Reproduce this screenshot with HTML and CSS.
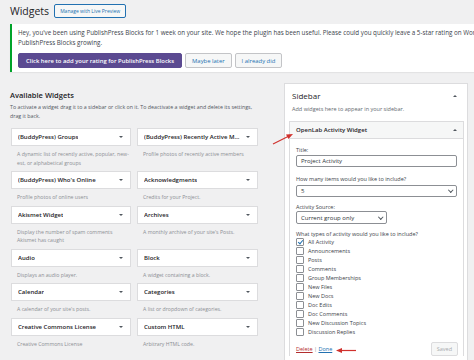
FILE: index.html
```html
<!DOCTYPE html>
<html lang="en">

<head>
    <meta charset="UTF-8">
    <meta name="viewport" content="width=device-width, initial-scale=1.0">
    <title>Widgets</title>
    <link rel="stylesheet" href="styles.css">
</head>

<body>
    <div class="page-head">
        <h1 class="page-title">Widgets</h1>
        <button class="btn-outline">Manage with Live Preview</button>
    </div>

    <div class="notice">
        <p>Hey, you've been using PublishPress Blocks for 1 week on your site. We hope the plugin has been useful. Please could you quickly leave a 5-star rating on WordPress.org to help keep</p>
        <p>PublishPress Blocks growing.</p>
        <div class="notice-actions">
            <button class="btn-primary">Click here to add your rating for PublishPress Blocks</button>
            <button class="btn-secondary">Maybe later</button>
            <button class="btn-secondary">I already did</button>
        </div>
    </div>

    <div class="main">
        <div class="available">
            <h2 class="section-title">Available Widgets</h2>
            <p class="section-desc">To activate a widget drag it to a sidebar or click on it. To deactivate a widget and delete its settings, drag it back.</p>

            <div class="widget-list">
                <div class="widget-item">
                    <div class="widget-top"><span>(BuddyPress) Groups</span><i class="caret"></i></div>
                    <div class="widget-desc">A dynamic list of recently active, popular, new&shy;est, or alphabetical groups</div>
                </div>
                <div class="widget-item">
                    <div class="widget-top"><span>(BuddyPress) Recently Active Members</span><i class="caret"></i></div>
                    <div class="widget-desc">Profile photos of recently active members</div>
                </div>
                <div class="widget-item">
                    <div class="widget-top"><span>(BuddyPress) Who's Online</span><i class="caret"></i></div>
                    <div class="widget-desc">Profile photos of online users</div>
                </div>
                <div class="widget-item">
                    <div class="widget-top"><span>Acknowledgments</span><i class="caret"></i></div>
                    <div class="widget-desc">Credits for your Project.</div>
                </div>
                <div class="widget-item">
                    <div class="widget-top"><span>Akismet Widget</span><i class="caret"></i></div>
                    <div class="widget-desc">Display the number of spam comments Akismet has caught</div>
                </div>
                <div class="widget-item">
                    <div class="widget-top"><span>Archives</span><i class="caret"></i></div>
                    <div class="widget-desc">A monthly archive of your site's Posts.</div>
                </div>
                <div class="widget-item">
                    <div class="widget-top"><span>Audio</span><i class="caret"></i></div>
                    <div class="widget-desc">Displays an audio player.</div>
                </div>
                <div class="widget-item">
                    <div class="widget-top"><span>Block</span><i class="caret"></i></div>
                    <div class="widget-desc">A widget containing a block.</div>
                </div>
                <div class="widget-item">
                    <div class="widget-top"><span>Calendar</span><i class="caret"></i></div>
                    <div class="widget-desc">A calendar of your site's posts.</div>
                </div>
                <div class="widget-item">
                    <div class="widget-top"><span>Categories</span><i class="caret"></i></div>
                    <div class="widget-desc">A list or dropdown of categories.</div>
                </div>
                <div class="widget-item">
                    <div class="widget-top"><span>Creative Commons License</span><i class="caret"></i></div>
                    <div class="widget-desc">Creative Commons License</div>
                </div>
                <div class="widget-item">
                    <div class="widget-top"><span>Custom HTML</span><i class="caret"></i></div>
                    <div class="widget-desc">Arbitrary HTML code.</div>
                </div>
            </div>
        </div>

        <div class="sidebar">
            <div class="sidebar-head">
                <h2 class="sidebar-title">Sidebar</h2>
                <i class="caret up"></i>
            </div>
            <p class="sidebar-desc">Add widgets here to appear in your sidebar.</p>

            <div class="open-widget">
                <div class="open-widget-top">
                    <span>OpenLab Activity Widget</span>
                    <i class="caret up"></i>
                </div>
                <div class="open-widget-body">
                    <label class="field-label">Title:</label>
                    <div class="text-input">Project Activity</div>

                    <label class="field-label">How many items would you like to include?</label>
                    <div class="select full"><span>5</span><i class="chevron"></i></div>

                    <label class="field-label">Activity Source:</label>
                    <div class="select short"><span>Current group only</span><i class="chevron"></i></div>

                    <label class="field-label">What types of activity would you like to include?</label>
                    <ul class="checks">
                        <li><span class="box checked"></span>All Activity</li>
                        <li><span class="box"></span>Announcements</li>
                        <li><span class="box"></span>Posts</li>
                        <li><span class="box"></span>Comments</li>
                        <li><span class="box"></span>Group Memberships</li>
                        <li><span class="box"></span>New Files</li>
                        <li><span class="box"></span>New Docs</li>
                        <li><span class="box"></span>Doc Edits</li>
                        <li><span class="box"></span>Doc Comments</li>
                        <li><span class="box"></span>New Discussion Topics</li>
                        <li><span class="box"></span>Discussion Replies</li>
                    </ul>

                    <div class="widget-control">
                        <div class="links"><a class="delete">Delete</a> | <a class="done">Done</a></div>
                        <button class="btn-saved">Saved</button>
                    </div>
                </div>
            </div>
        </div>
    </div>

    <!-- annotation arrows drawn over the screenshot -->
    <svg class="arrows" width="474" height="360" viewBox="0 0 474 360">
        <line x1="273" y1="144" x2="289" y2="136" stroke="#d0312d" stroke-width="1.2" />
        <polygon points="293,134 286,134.5 288.5,139" fill="#d0312d" />
        <line x1="356" y1="350.5" x2="341" y2="350.5" stroke="#d0312d" stroke-width="1.2" />
        <polygon points="336,350.5 342,348 342,353" fill="#d0312d" />
    </svg>
</body>

</html>
```

FILE: styles.css
```css
html,
body {
    margin: 0;
    overflow: hidden;
}

body {
    width: 474px;
    height: 360px;
    position: relative;
    background: #f0f0f1;
    color: #3c434a;
    font-family: "Open Sans", "Noto Sans", sans-serif;
    font-size: 6px;
}

button {
    font-family: inherit;
    cursor: pointer;
}

.page-head {
    display: flex;
    align-items: center;
    gap: 5px;
    height: 20px;
    padding: 3px 0 1px 10px;
    box-sizing: border-box;
}

.page-title {
    margin: 0;
    font-size: 10.5px;
    font-weight: 400;
    color: #1d2327;
}

.btn-outline {
    height: 14px;
    padding: 0 5px;
    font-size: 5px;
    color: #2271b1;
    background: #f6f7f7;
    border: 1px solid #2271b1;
    border-radius: 2px;
}

.notice {
    margin: 4px 0 0 10px;
    width: 560px;
    height: 48px;
    padding: 4px 6px;
    box-sizing: border-box;
    background: #fff;
    border-left: 2px solid #00a32a;
    box-shadow: 0 1px 1px rgba(0, 0, 0, 0.05);
}

.notice p {
    margin: 0;
    font-size: 6.25px;
    line-height: 10px;
    white-space: nowrap;
    color: #3c434a;
}

.notice-actions {
    display: flex;
    gap: 3px;
    margin-top: 5px;
}

.btn-primary {
    height: 15px;
    padding: 0 7px;
    font-size: 5.9px;
    font-weight: 600;
    color: #fff;
    background: #5b4a91;
    border: 1px solid #5b4a91;
    border-radius: 2px;
}

.btn-secondary {
    height: 15px;
    padding: 0 6px;
    font-size: 5.9px;
    color: #2271b1;
    background: #f6f7f7;
    border: 1px solid #c3c4c7;
    border-radius: 2px;
}

.main {
    display: flex;
    gap: 26px;
    margin-top: 11px;
    padding-left: 10px;
}

/* Available widgets */
.available {
    width: 248px;
    padding-top: 7px;
}

.section-title {
    margin: 0;
    font-size: 7.5px;
    font-weight: 600;
    color: #1d2327;
    line-height: 10px;
}

.section-desc {
    margin: 3px 0 7px;
    line-height: 9px;
    font-size: 5.3px;
    color: #50575e;
}

.widget-list {
    display: grid;
    grid-template-columns: 120px 121px;
    column-gap: 6px;
    margin-left: 1px;
}

.widget-top {
    display: flex;
    align-items: center;
    justify-content: space-between;
    height: 18px;
    padding: 0 7px 0 6px;
    box-sizing: border-box;
    background: #fff;
    border: 1px solid #dcdcde;
    font-size: 6px;
    font-weight: 600;
    color: #1d2327;
}

.widget-top span {
    overflow: hidden;
    white-space: nowrap;
    text-overflow: ellipsis;
    max-width: 96px;
}

.widget-desc {
    padding: 4px 1px 4px 6px;
    line-height: 8.5px;
    font-size: 5.2px;
    color: #8c8f94;
    hyphens: manual;
}

.caret {
    width: 0;
    height: 0;
    border-left: 2px solid transparent;
    border-right: 2px solid transparent;
    border-top: 2.5px solid #50575e;
}

.caret.up {
    border-top: 0;
    border-bottom: 2.5px solid #50575e;
}

/* Sidebar */
.sidebar {
    width: 184px;
    height: 290px;
    padding: 0 3px 0 4px;
    box-sizing: border-box;
    background: #fff;
    border: 1px solid #dcdcde;
}

.sidebar-head {
    display: flex;
    align-items: center;
    justify-content: space-between;
    padding: 7px 7px 0 3px;
}

.sidebar-title {
    margin: 0;
    font-size: 8px;
    font-weight: 500;
    color: #1d2327;
    line-height: 10px;
}

.sidebar-desc {
    margin: 4px 0 8px 3px;
    font-size: 5.5px;
    color: #646970;
    line-height: 8px;
}

.open-widget {
    border: 1px solid #dcdcde;
    border-bottom: 0;
}

.open-widget-top {
    display: flex;
    align-items: center;
    justify-content: space-between;
    height: 16px;
    padding: 0 6px 0 6px;
    background: #f6f7f7;
    border-bottom: 1px solid #dcdcde;
    font-size: 6px;
    font-weight: 600;
    color: #1d2327;
}

.open-widget-body {
    padding: 7px 6px 0 6px;
}

.field-label {
    display: block;
    font-size: 5.5px;
    line-height: 8px;
    color: #3c434a;
}

.text-input,
.select {
    display: flex;
    align-items: center;
    justify-content: space-between;
    height: 12px;
    padding: 0 4px;
    box-sizing: border-box;
    border: 1px solid #8c8f94;
    border-radius: 2px;
    font-size: 6px;
    color: #2c3338;
}

.text-input {
    margin-top: 1px;
    margin-bottom: 8px;
}

.select.full {
    margin-top: 2px;
    margin-bottom: 6px;
}

.select.short {
    width: 91px;
    height: 13px;
    margin-bottom: 6px;
}

.chevron {
    width: 2.5px;
    height: 2.5px;
    border-right: 1px solid #50575e;
    border-bottom: 1px solid #50575e;
    transform: translateY(-1px) rotate(45deg);
}

.checks {
    list-style: none;
    margin: -1px 0 0;
    padding: 0;
}

.checks li {
    display: flex;
    align-items: center;
    gap: 4px;
    height: 9.1px;
    font-size: 5.5px;
    color: #3c434a;
}

.box {
    position: relative;
    width: 6px;
    height: 6px;
    border: 1px solid #8c8f94;
    border-radius: 1px;
    background: #fff;
}

.box.checked::after {
    content: "";
    position: absolute;
    left: 1.5px;
    top: 0;
    width: 2px;
    height: 4px;
    border-right: 1.2px solid #2271b1;
    border-bottom: 1.2px solid #2271b1;
    transform: rotate(40deg);
}

.widget-control {
    display: flex;
    justify-content: space-between;
    align-items: flex-end;
    margin-top: 5px;
}

.links {
    font-size: 5.5px;
    color: #8c8f94;
    padding-bottom: 3px;
}

.delete {
    color: #b32d2e;
    text-decoration: underline;
}

.done {
    color: #2271b1;
    text-decoration: underline;
}

.btn-saved {
    height: 14px;
    margin-right: -1px;
    padding: 0 5px;
    font-size: 5.5px;
    color: #a7aaad;
    background: #f6f7f7;
    border: 1px solid #dcdcde;
    border-radius: 2px;
}

.arrows {
    position: absolute;
    top: 0;
    left: 0;
    pointer-events: none;
}
```
